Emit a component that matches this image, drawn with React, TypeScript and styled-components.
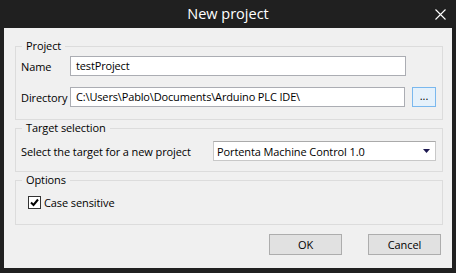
import React from 'react';
import styled, { createGlobalStyle } from 'styled-components';

const GlobalStyle = createGlobalStyle`
  html, body {
    margin: 0;
    padding: 0;
    background: #202020;
  }
  body {
    font-family: "Open Sans", "Noto Sans", sans-serif;
    font-size: 11px;
    color: #000;
  }
`

const Window = styled.div`
  width: 456px;
  height: 273px;
  display: flex;
  flex-direction: column;
  background: #202020;
`

const TitleBar = styled.div`
  height: 28px;
  display: grid;
  grid-template-columns: 1fr auto 1fr;
  align-items: center;
`

const Title = styled.div`
  grid-column: 2;
  color: #ffffff;
  font-size: 14.5px;
  line-height: 28px;
  margin-top: -1px;
`

const CloseButton = styled.button`
  justify-self: end;
  width: 12px;
  height: 12px;
  margin-right: 10px;
  padding: 0;
  border: none;
  background: transparent;
  display: flex;
  align-items: center;
  justify-content: center;
`

const Body = styled.div`
  flex: 1;
  margin: 0 4px 5px;
  padding: 10px 9px 0 11px;
  background: #f0f0f0;
  display: flex;
  flex-direction: column;
`

const Group = styled.fieldset<{ $padTop: number; $padBottom: number }>`
  margin: 0;
  min-width: 0;
  border: 1px solid #dcdcdc;
  padding: ${p => p.$padTop}px 6px ${p => p.$padBottom}px 5px;
  display: flex;
  flex-direction: column;
  gap: 11px;
`

const Legend = styled.legend`
  margin-left: 1px;
  padding: 0 4px;
  line-height: 16px;
  font-size: 11px;
  letter-spacing: -0.1px;
`

const Row = styled.div`
  display: flex;
  align-items: center;
  height: 20px;
`

const Label = styled.span<{ $width?: number }>`
  width: ${p => (p.$width ? `${p.$width}px` : 'auto')};
  flex: ${p => (p.$width ? 'none' : '1')};
  letter-spacing: -0.1px;
  white-space: nowrap;
`

const TextBox = styled.div`
  box-sizing: border-box;
  width: 336px;
  height: 20px;
  border: 1px solid #abadb3;
  background: #ffffff;
  padding: 0 5px;
  line-height: 18px;
  letter-spacing: -0.15px;
  white-space: nowrap;
`

const BrowseButton = styled.button`
  box-sizing: border-box;
  width: 24px;
  height: 20px;
  margin-left: 7px;
  padding: 0 0 2px;
  border: 1px solid #7ab8ee;
  background: #e5f1fb;
  font-family: inherit;
  font-size: 11px;
  color: #000;
  line-height: 16px;
`

const Select = styled.div`
  box-sizing: border-box;
  width: 223px;
  height: 20px;
  border: 1px solid #c8c8c8;
  border-top-color: #aaaaaa;
  background: #ffffff;
  display: flex;
  align-items: center;
  padding: 0 5px 0 3px;
  letter-spacing: -0.1px;
`

const SelectText = styled.span`
  flex: 1;
  white-space: nowrap;
`

const CheckRow = styled.label`
  display: flex;
  align-items: center;
  gap: 3px;
  height: 16px;
  padding-left: 7px;
  letter-spacing: -0.1px;
`

const CheckBox = styled.span`
  box-sizing: border-box;
  width: 13px;
  height: 13px;
  border: 1px solid #333333;
  background: #ffffff;
  display: flex;
  align-items: center;
  justify-content: center;
`

const Footer = styled.div`
  display: flex;
  justify-content: flex-end;
  gap: 26px;
  margin-top: 9px;
  padding-right: 2px;
`

const DialogButton = styled.button`
  box-sizing: border-box;
  width: 73px;
  height: 21px;
  border: 1px solid #adadad;
  background: #e1e1e1;
  font-family: inherit;
  font-size: 11px;
  color: #000;
  padding: 0;
  letter-spacing: -0.1px;
`

const App = () => {
  return (
    <>
      <GlobalStyle />
      <Window>
        <TitleBar>
          <Title>New project</Title>
          <CloseButton aria-label="Close">
            <svg width="11" height="11" viewBox="0 0 11 11">
              <path d="M0.5 0.5 L10.5 10.5 M10.5 0.5 L0.5 10.5" stroke="#ffffff" strokeWidth="1.1" />
            </svg>
          </CloseButton>
        </TitleBar>
        <Body>
          <Group $padTop={2} $padBottom={12}>
            <Legend>Project</Legend>
            <Row>
              <Label $width={49}>Name</Label>
              <TextBox>testProject</TextBox>
            </Row>
            <Row>
              <Label $width={49}>Directory</Label>
              <TextBox>C:\Users\Pablo\Documents\Arduino PLC IDE\</TextBox>
              <BrowseButton>...</BrowseButton>
            </Row>
          </Group>
          <Group $padTop={5} $padBottom={10}>
            <Legend>Target selection</Legend>
            <Row>
              <Label>Select the target for a new project</Label>
              <Select>
                <SelectText>Portenta Machine Control 1.0</SelectText>
                <svg width="7" height="4" viewBox="0 0 7 4">
                  <path d="M0 0 H7 L3.5 4 Z" fill="#1c1850" />
                </svg>
              </Select>
            </Row>
          </Group>
          <Group $padTop={6} $padBottom={14}>
            <Legend>Options</Legend>
            <CheckRow>
              <CheckBox>
                <svg width="9" height="9" viewBox="0 0 9 9">
                  <path d="M1 4.5 L3.5 7 L8 1.5" stroke="#000" strokeWidth="2" fill="none" />
                </svg>
              </CheckBox>
              Case sensitive
            </CheckRow>
          </Group>
          <Footer>
            <DialogButton>OK</DialogButton>
            <DialogButton>Cancel</DialogButton>
          </Footer>
        </Body>
      </Window>
    </>
  )
}

export default App;
